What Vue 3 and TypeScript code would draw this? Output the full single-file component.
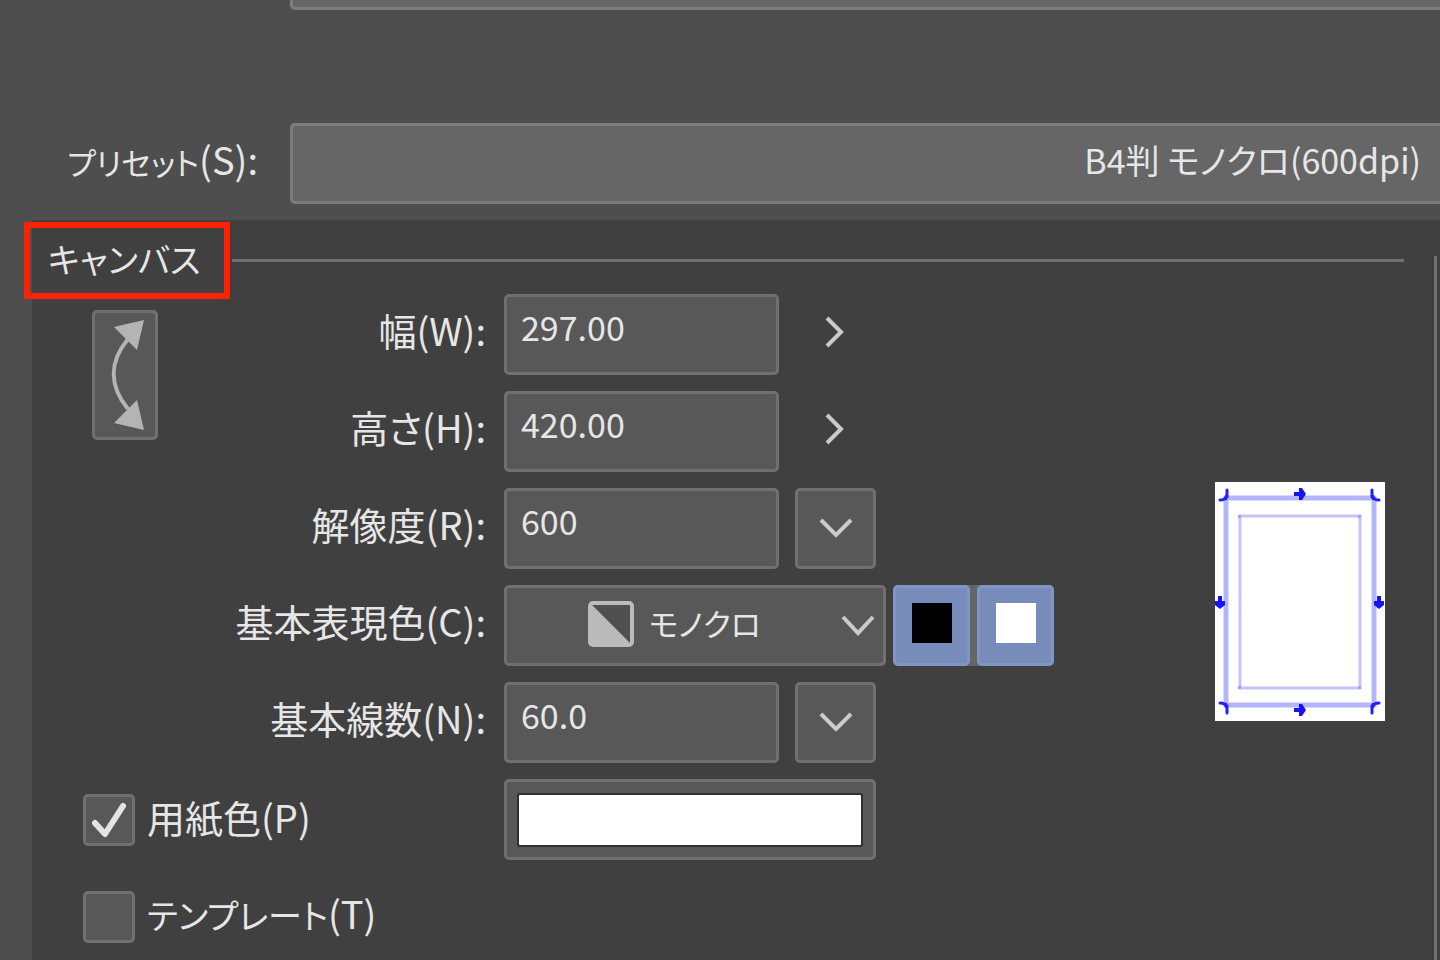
<script setup lang="ts">
import { ref } from 'vue'

const preset = ref('B4')
const width = ref('297.00')
const height = ref('420.00')
const resolution = ref('600')
const colorMode = ref('mono')
const lineCount = ref('60.0')
const usePaper = ref(true)
const useTemplate = ref(false)
const black = ref(true)
const white = ref(true)

function swapSize(): void {
  const previous = width.value
  width.value = height.value
  height.value = previous
}
</script>

<template>
  <main class="dialog">
    <header class="top">
      <button class="bar-above" type="button" aria-label="用途"></button>
      <div class="preset-row">
        <label class="preset-label" for="preset"><span class="kana small">プリセット</span>(S):</label>
        <select id="preset" v-model="preset" class="preset">
          <option value="B4">B4判 モノクロ(600dpi)</option>
        </select>
      </div>
    </header>

    <section class="panel" aria-labelledby="canvas-title">
      <div class="group">
        <div class="title-row">
          <h2 id="canvas-title" class="title kana">キャンバス</h2>
          <span class="rule"></span>
        </div>
        <div class="body">
          <form class="form" @submit.prevent>
            <button class="swap" type="button" aria-label="幅と高さを入れ替え" @click="swapSize">
              <svg viewBox="0 0 60 124" width="60" height="124">
                <path d="M33 26C14 49 14 73 33 96" fill="none" stroke="#b4b4b4" stroke-width="4" />
                <path d="M19 14L49 7L42 37Z M19 110L49 117L42 87Z" fill="#b4b4b4" />
              </svg>
            </button>

            <label class="label" for="w">幅(W):</label>
            <div class="controls">
              <input id="w" v-model="width" class="field" type="text" />
              <button class="more" type="button" aria-label="幅の詳細">
                <svg viewBox="0 0 34 34" width="34" height="34"><path d="M8 3L22 17L8 31" /></svg>
              </button>
            </div>

            <label class="label" for="h">高さ(H):</label>
            <div class="controls">
              <input id="h" v-model="height" class="field" type="text" />
              <button class="more" type="button" aria-label="高さの詳細">
                <svg viewBox="0 0 34 34" width="34" height="34"><path d="M8 3L22 17L8 31" /></svg>
              </button>
            </div>

            <label class="label" for="r">解像度(R):</label>
            <div class="controls">
              <input id="r" v-model="resolution" class="field" type="text" />
              <button class="more boxed" type="button" aria-label="解像度の候補">
                <svg viewBox="0 0 34 34" width="34" height="34"><path d="M2 11L17 26L32 11" /></svg>
              </button>
            </div>

            <label class="label" for="c">基本表現色(C):</label>
            <div class="controls tight">
              <div class="mode">
                <select id="c" v-model="colorMode" class="mode-select">
                  <option value="mono">モノクロ</option>
                </select>
                <svg class="mode-icon" viewBox="0 0 46 46" width="46" height="46">
                  <rect x="2" y="2" width="42" height="42" rx="3" fill="#505050" stroke="#bbb" stroke-width="4" />
                  <path d="M2 2L44 44H2Z" fill="#bbb" />
                </svg>
                <svg class="mode-arrow" viewBox="0 0 34 34" width="34" height="34"><path d="M2 9L17 25L32 9" /></svg>
              </div>
              <div class="swatches">
                <button class="swatch" type="button" aria-label="黒" :aria-pressed="black" @click="black = !black">
                  <span class="chip black"></span>
                </button>
                <button class="swatch" type="button" aria-label="白" :aria-pressed="white" @click="white = !white">
                  <span class="chip"></span>
                </button>
              </div>
            </div>

            <label class="label" for="n">基本線数(N):</label>
            <div class="controls">
              <input id="n" v-model="lineCount" class="field" type="text" />
              <button class="more boxed" type="button" aria-label="基本線数の候補">
                <svg viewBox="0 0 34 34" width="34" height="34"><path d="M2 11L17 26L32 11" /></svg>
              </button>
            </div>

            <label class="check-label">
              <span class="check">
                <input v-model="usePaper" type="checkbox" />
                <svg v-if="usePaper" viewBox="0 0 52 52" width="52" height="52">
                  <path d="M12 29L22 40L40 12" fill="none" stroke="#e4e4e4" stroke-width="6" stroke-linecap="round" stroke-linejoin="round" />
                </svg>
              </span>
              <span class="check-text">用紙色(P)</span>
            </label>
            <div class="controls">
              <button class="paper" type="button" aria-label="用紙色を選択"><span class="paper-color"></span></button>
            </div>

            <label class="check-label">
              <span class="check"><input v-model="useTemplate" type="checkbox" /></span>
              <span class="check-text"><span class="kana">テンプレート</span>(T)</span>
            </label>
          </form>

          <svg class="preview" viewBox="0 0 170 239" width="170" height="239" role="img" aria-label="用紙のプレビュー">
            <rect width="170" height="239" fill="#fff" />
            <rect x="11" y="16" width="148" height="207" fill="none" stroke="#b5b5fc" stroke-width="5" />
            <rect x="25" y="34" width="120" height="172" fill="none" stroke="#c4c4fb" stroke-width="3" />
            <g fill="#a0a0f4">
              <rect x="23" y="33" width="3" height="3" /><rect x="143" y="33" width="3" height="3" />
              <rect x="23" y="204" width="3" height="3" /><rect x="143" y="204" width="3" height="3" />
            </g>
            <path
              d="M12 8V15Q10 18 5 18M157 8V15Q159 18 164 18M12 231V224Q10 221 5 221M157 231V224Q159 221 164 221"
              fill="none" stroke="#2222ee" stroke-width="3" stroke-linecap="round"
            />
            <path d="M12 11V18H7ZM157 11V18H162ZM12 228V221H7ZM157 228V221H162Z" fill="#2222ee" />
            <g fill="#1414f5">
              <path d="M79 10H84V6H87L91 12L87 18H84V14H79Z" />
              <path d="M79 226H84V222H87L91 228L87 234H84V230H79Z" />
              <path d="M3 114H7V119H10V123L5 127L0 123V119H3Z" />
              <path d="M162 114H166V119H169V123L164 127L159 123V119H162Z" />
            </g>
          </svg>
        </div>
      </div>
      <span class="divider"></span>
    </section>
  </main>
</template>

<style>
html,
body {
  margin: 0;
  background: #4e4e4e;
}
</style>

<style scoped>
.dialog {
  box-sizing: border-box;
  display: flex;
  flex-direction: column;
  min-height: 100vh;
  overflow: hidden;
  background: #4e4e4e;
  color: #e6e6e6;
  font-family: "Noto Sans CJK JP", sans-serif;
  font-size: 38px;
  font-feature-settings: "palt";
  line-height: 48px;
}
button,
input,
select {
  box-sizing: border-box;
  margin: 0;
  padding: 0;
  color: inherit;
  font: inherit;
  font-feature-settings: "palt";
  appearance: none;
  border: 3px solid #707070;
  border-radius: 5px;
  background: #585858;
}
.kana {
  font-size: 34px;
}
.small {
  font-size: 31px;
}
.top {
  display: flex;
  flex-direction: column;
  gap: 113px;
  padding-bottom: 16px;
}
.bar-above {
  height: 10px;
  margin-left: 290px;
  border-color: #7c7c7c;
  border-width: 0 0 3px 3px;
  border-radius: 0 0 0 5px;
  background: #666;
}
.preset-row {
  display: flex;
  align-items: center;
}
.preset-label {
  box-sizing: border-box;
  width: 290px;
  padding-right: 32px;
  padding-bottom: 6px;
  text-align: right;
  white-space: nowrap;
}
.preset {
  flex: 1;
  min-width: 0;
  height: 81px;
  padding: 0 19px 8px 0;
  border-color: #7c7c7c;
  border-right: 0;
  border-radius: 5px 0 0 5px;
  background: #666;
  font-size: 34px;
  text-align-last: right;
}
.panel {
  display: flex;
  flex: 1;
  margin-left: 32px;
  background: #404040;
}
.group {
  flex: 1;
  min-width: 0;
}
.title-row {
  box-sizing: border-box;
  display: flex;
  align-items: center;
  gap: 2px;
  height: 74px;
  margin-right: 30px;
  padding-top: 6px;
}
.title {
  position: relative;
  box-sizing: border-box;
  width: 198px;
  margin: 0;
  padding-left: 16px;
  padding-bottom: 3px;
  font-weight: 400;
  white-space: nowrap;
}
.title::before {
  content: "";
  position: absolute;
  inset: -13px 0 -13px -8px;
  border: 6px solid #ff2200;
}
.rule {
  flex: 1;
  height: 3px;
  background: #707070;
}
.body {
  display: flex;
  align-items: flex-start;
  justify-content: space-between;
  padding-left: 51px;
  padding-right: 49px;
}
.form {
  display: grid;
  grid-template-columns: 75px 310px auto;
  grid-auto-rows: 81px;
  gap: 16px 18px;
}
.swap {
  grid-column: 1;
  grid-row: 1 / span 2;
  justify-self: end;
  width: 66px;
  height: 130px;
  margin-top: 16px;
}
.swap svg {
  display: block;
}
.label {
  grid-column: 2;
  align-self: center;
  padding-bottom: 10px;
  text-align: right;
  white-space: nowrap;
}
.controls {
  grid-column: 3;
  display: flex;
  gap: 16px;
}
.tight {
  gap: 7px;
}
.field {
  width: 275px;
  height: 81px;
  padding: 0 14px 16px;
  font-size: 34px;
}
.more {
  display: grid;
  place-items: center;
  width: 81px;
  height: 81px;
  padding-bottom: 5px;
  border-color: transparent;
  background: none;
}
.more svg,
.mode-arrow {
  fill: none;
  stroke: #cbcbcb;
  stroke-width: 4;
}
.boxed {
  border-color: #707070;
  background: #585858;
}
.mode {
  position: relative;
  width: 382px;
}
.mode-select {
  width: 100%;
  height: 81px;
  padding: 0 0 6px 142px;
  font-size: 31px;
}
.mode-icon,
.mode-arrow {
  position: absolute;
  top: 16px;
  left: 84px;
  pointer-events: none;
}
.mode-arrow {
  top: 23px;
  left: 337px;
}
.swatches {
  display: flex;
  gap: 7px;
  border-radius: 5px;
  background: #666;
}
.swatch {
  display: grid;
  place-items: center;
  width: 77px;
  height: 81px;
  padding-bottom: 5px;
  border-color: #8096c4;
  background: #788cbb;
}
.chip {
  width: 40px;
  height: 40px;
  background: #fff;
}
.black {
  background: #000;
}
.check-label {
  grid-column: 1 / span 2;
  display: flex;
  align-items: center;
  gap: 12px;
  white-space: nowrap;
}
.check {
  position: relative;
  width: 52px;
  height: 52px;
}
.check input {
  display: block;
  width: 52px;
  height: 52px;
}
.check svg {
  position: absolute;
  inset: 0;
  pointer-events: none;
}
.check-text {
  padding-bottom: 6px;
}
.paper {
  width: 372px;
  height: 81px;
  padding: 10px;
}
.paper-color {
  box-sizing: border-box;
  display: block;
  height: 54px;
  border: 2px solid #303030;
  border-radius: 3px;
  background: #fff;
}
.preview {
  flex: none;
  margin-top: 188px;
}
.divider {
  width: 3px;
  margin: 36px 3px 0 0;
  background: #707070;
}
</style>
